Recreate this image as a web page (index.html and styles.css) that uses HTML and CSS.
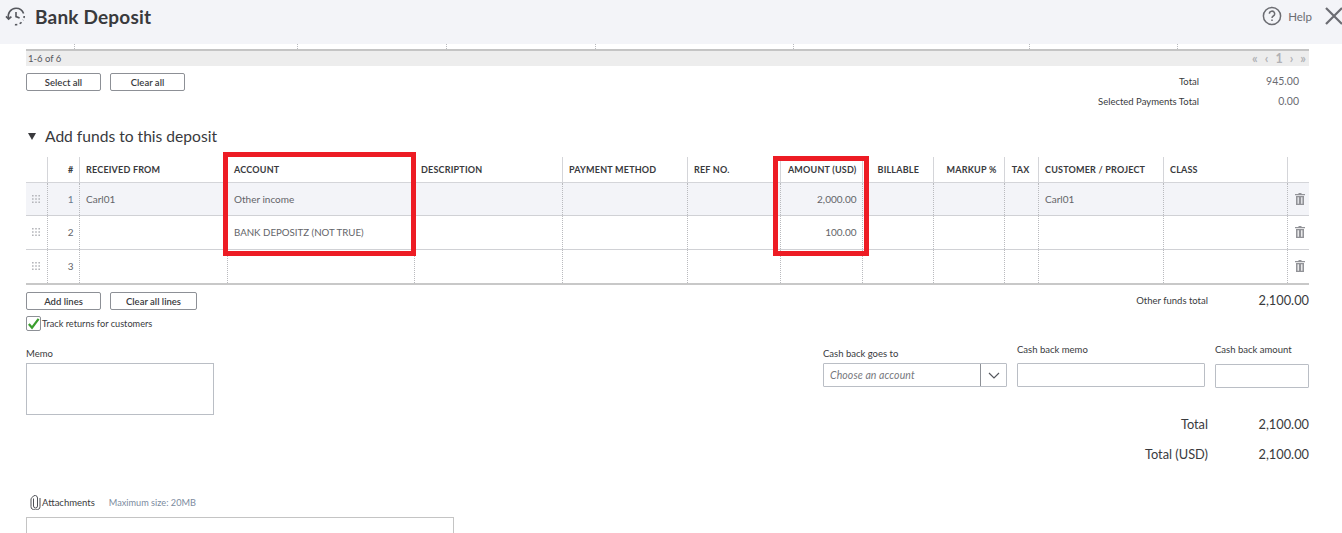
FILE: index.html
```html
<!DOCTYPE html>
<html lang="en">
<head>
<meta charset="utf-8">
<title>Bank Deposit</title>
<link rel="stylesheet" href="styles.css">
</head>
<body>
<header class="topbar">
  <div class="title-group">
    <svg class="history-icon" width="22" height="22" viewBox="0 0 22 22" fill="none" stroke="#55575d" stroke-width="1.6">
      <path d="M3.6 13.5A8 8 0 0 1 11 3.2a8 8 0 0 1 7.6 5.4"/>
      <path d="M19.2 11a8 8 0 0 1-1.2 4.2" stroke-dasharray="2 2"/>
      <path d="M16.5 17.2a8 8 0 0 1-7 2.4" stroke-dasharray="2.4 2.4"/>
      <path d="M1 11.4l2.6 2.8 2.8-2.6"/>
      <path d="M11 7v4.6l3.6 1.4"/>
    </svg>
    <h1 class="title">Bank Deposit</h1>
  </div>
  <div class="top-actions">
    <svg width="20" height="20" viewBox="0 0 20 20" fill="none" stroke="#6b6c72" stroke-width="1.5">
      <circle cx="10" cy="10" r="8.6"/>
      <path d="M7.4 7.8a2.6 2.6 0 1 1 3.9 2.2c-.9.5-1.3 1-1.3 2"/>
      <path d="M10 13.4v1.6"/>
    </svg>
    <span class="help">Help</span>
    <svg class="close" width="18" height="18" viewBox="0 0 18 18" fill="none" stroke="#6b6c72" stroke-width="2.2">
      <path d="M1 1l16 16M17 1L1 17"/>
    </svg>
  </div>
</header>

<main class="page">
  <div class="ticks">
    <i></i><i></i><i></i><i></i><i></i><i></i><i></i>
  </div>
  <div class="pager">
    <span>1-6 of 6</span>
    <span class="pager-nav"><span>«</span><span>‹</span><b>1</b><span>›</span><span>»</span></span>
  </div>

  <div class="actions-row first">
    <div class="btns">
      <button class="btn w75">Select all</button>
      <button class="btn w75">Clear all</button>
    </div>
    <div class="payment-totals">
      <div class="pt-row"><span class="pt-label">Total</span><span class="pt-val">945.00</span></div>
      <div class="pt-row"><span class="pt-label">Selected Payments Total</span><span class="pt-val">0.00</span></div>
    </div>
  </div>

  <h2 class="section-title"><span class="caret"></span>Add funds to this deposit</h2>

  <table class="lines">
    <colgroup>
      <col class="c21"><col class="c32"><col class="c148"><col class="c187"><col class="c148"><col class="c125"><col class="c93"><col class="c82"><col class="c71"><col class="c71"><col class="c34"><col class="c125"><col class="c124"><col class="c22">
    </colgroup>
    <thead>
      <tr>
        <th></th><th class="r">#</th><th>RECEIVED FROM</th><th>ACCOUNT</th><th>DESCRIPTION</th><th>PAYMENT METHOD</th><th>REF NO.</th><th class="r">AMOUNT (USD)</th><th class="billable">BILLABLE</th><th class="r inset7">MARKUP %</th><th class="r inset8">TAX</th><th>CUSTOMER / PROJECT</th><th>CLASS</th><th></th>
      </tr>
    </thead>
    <tbody>
      <tr class="shaded">
        <td class="grip"><svg class="grip-ico" width="8" height="8" viewBox="0 0 8 8" fill="#b4b5ba"><path d="M0 0h1.6v1.6H0zM3.2 0h1.6v1.6H3.2zM6.4 0H8v1.6H6.4zM0 3.2h1.6v1.6H0zM3.2 3.2h1.6v1.6H3.2zM6.4 3.2H8v1.6H6.4zM0 6.4h1.6V8H0zM3.2 6.4h1.6V8H3.2zM6.4 6.4H8V8H6.4z"/></svg></td>
        <td class="r num">1</td><td>Carl01</td><td>Other income</td><td></td><td></td><td></td><td class="r">2,000.00</td><td></td><td></td><td></td><td>Carl01</td><td></td>
        <td class="trash"><svg width="10" height="12" viewBox="0 0 10 12" fill="#929398"><path d="M3.5 0h3v1H10v1.2H0V1h3.5zM1 3h8v9H1zM2.6 4.2v6.6h1.2V4.2zM6.2 4.2v6.6h1.2V4.2z" fill-rule="evenodd"/></svg></td>
      </tr>
      <tr>
        <td class="grip"><svg class="grip-ico" width="8" height="8" viewBox="0 0 8 8" fill="#b4b5ba"><path d="M0 0h1.6v1.6H0zM3.2 0h1.6v1.6H3.2zM6.4 0H8v1.6H6.4zM0 3.2h1.6v1.6H0zM3.2 3.2h1.6v1.6H3.2zM6.4 3.2H8v1.6H6.4zM0 6.4h1.6V8H0zM3.2 6.4h1.6V8H3.2zM6.4 6.4H8V8H6.4z"/></svg></td>
        <td class="r">2</td><td></td><td class="caps">BANK DEPOSITZ (NOT TRUE)</td><td></td><td></td><td></td><td class="r">100.00</td><td></td><td></td><td></td><td></td><td></td>
        <td class="trash"><svg width="10" height="12" viewBox="0 0 10 12" fill="#929398"><path d="M3.5 0h3v1H10v1.2H0V1h3.5zM1 3h8v9H1zM2.6 4.2v6.6h1.2V4.2zM6.2 4.2v6.6h1.2V4.2z" fill-rule="evenodd"/></svg></td>
      </tr>
      <tr class="last-row">
        <td class="grip"><svg class="grip-ico" width="8" height="8" viewBox="0 0 8 8" fill="#b4b5ba"><path d="M0 0h1.6v1.6H0zM3.2 0h1.6v1.6H3.2zM6.4 0H8v1.6H6.4zM0 3.2h1.6v1.6H0zM3.2 3.2h1.6v1.6H3.2zM6.4 3.2H8v1.6H6.4zM0 6.4h1.6V8H0zM3.2 6.4h1.6V8H3.2zM6.4 6.4H8V8H6.4z"/></svg></td>
        <td class="r">3</td><td></td><td></td><td></td><td></td><td></td><td></td><td></td><td></td><td></td><td></td><td></td>
        <td class="trash"><svg width="10" height="12" viewBox="0 0 10 12" fill="#929398"><path d="M3.5 0h3v1H10v1.2H0V1h3.5zM1 3h8v9H1zM2.6 4.2v6.6h1.2V4.2zM6.2 4.2v6.6h1.2V4.2z" fill-rule="evenodd"/></svg></td>
      </tr>
    </tbody>
  </table>

  <div class="highlight hl-account"></div>
  <div class="highlight hl-amount"></div>

  <div class="actions-row second">
    <div class="btns">
      <button class="btn w75">Add lines</button>
      <button class="btn w87">Clear all lines</button>
    </div>
    <div class="funds-total"><span class="ft-label">Other funds total</span><span class="ft-val">2,100.00</span></div>
  </div>

  <label class="track">
    <span class="checkbox"><svg width="14" height="13" viewBox="0 0 14 13" fill="none" stroke="#3b9e2e" stroke-width="2.4"><path d="M2 7l3.4 4L12.5 1.5"/></svg></span>
    Track returns for customers
  </label>

  <div class="form-row">
    <div class="memo">
      <div class="field-label">Memo</div>
      <div class="memo-box"></div>
    </div>
    <div class="cash">
      <div class="cash-goes">
        <div class="field-label">Cash back goes to</div>
        <div class="select"><span class="select-text">Choose an account</span><span class="select-arrow"><svg width="12" height="7" viewBox="0 0 12 7" fill="none" stroke="#55575d" stroke-width="1.2"><path d="M1 1l5 5 5-5"/></svg></span></div>
      </div>
      <div class="cash-memo">
        <div class="field-label gap-large">Cash back memo</div>
        <div class="input"></div>
      </div>
      <div class="cash-amount">
        <div class="field-label gap-larger">Cash back amount</div>
        <div class="input"></div>
      </div>
    </div>
  </div>

  <div class="grand">
    <div class="g-row"><span class="g-label">Total</span><span class="g-val">2,100.00</span></div>
    <div class="g-row"><span class="g-label">Total (USD)</span><span class="g-val">2,100.00</span></div>
  </div>

  <div class="attach-head">
    <svg width="11" height="15" viewBox="0 0 11 15" fill="none" stroke="#4f5157" stroke-width="1"><path d="M3.5 3.5v7.5a2 2 0 0 0 4 0V3A2.5 2.5 0 0 0 2.7 2 L1 3.5v8a4.2 3.2 0 0 0 9 0V3"/></svg>
    <span class="attach-title">Attachments</span>
    <span class="attach-size">Maximum size: 20MB</span>
  </div>
  <div class="attach-box"></div>
</main>
</body>
</html>
```

FILE: styles.css
```css
* { box-sizing: border-box; }
html, body { margin: 0; padding: 0; height: 533px; overflow: hidden; }
body { font-family: "Lato", "Liberation Sans", sans-serif; background: #fff; color: #393a3d; font-size: 9.5px; position: relative; }

.topbar { height: 44px; background: #f3f4f8; display: flex; justify-content: space-between; align-items: flex-start; }
.title-group { display: flex; align-items: center; padding: 6px 0 0 5px; }
.history-icon { margin: -2px 8px 0 0; }
.title { margin: 0; font-size: 19px; font-weight: 700; letter-spacing: 0.2px; color: #393a3d; line-height: 22px; }
.top-actions { display: flex; align-items: center; padding-top: 6px; margin-right: -1px; }
.help { font-size: 11.5px; color: #6b6c72; margin: 0 13px 0 6px; }
.close { display: block; }

.page { padding: 0 33px 0 26px; }

.ticks { height: 5px; display: grid; grid-template-columns: 49px 223px 149px 149px 198px 236px 148px; }
.ticks i { justify-self: end; border-right: 1px dotted #b9babe; }
.pager { height: 17px; background: #ededed; border-top: 2px solid #c4c4c4; display: flex; justify-content: space-between; align-items: center; padding: 0 3px 0 2px; font-size: 9.5px; color: #55575d; }
.pager-nav { display: flex; gap: 7px; color: #b0b1b5; font-size: 12.5px; font-weight: 700; }
.pager-nav b { font-weight: 700; }

.actions-row { display: flex; justify-content: space-between; align-items: flex-start; }
.actions-row.first { margin-top: 7px; height: 43px; }
.actions-row.second { margin-top: 7px; height: 23px; }
.btns { display: flex; gap: 9px; }
.btn { height: 18px; padding: 0; background: #fff; border: 1px solid #8d9096; border-radius: 2px; font: 600 9.5px "Lato", sans-serif; color: #393a3d; }
.w75 { width: 75px; }
.w87 { width: 87px; }

.payment-totals { margin-top: -2px; }
.pt-row { display: flex; justify-content: flex-end; height: 20px; align-items: center; }
.pt-label { font-size: 9.5px; color: #393a3d; }
.pt-val { width: 110px; text-align: right; padding-right: 10px; font-size: 10.5px; color: #6b6c72; }

.section-title { margin: 9px 0 0; height: 22px; display: flex; align-items: center; font-size: 15.6px; font-weight: 400; color: #393a3d; }
.caret { width: 0; height: 0; border-left: 4px solid transparent; border-right: 4px solid transparent; border-top: 7px solid #393a3d; margin: 0 9px 0 2px; }

.lines { width: 1283px; table-layout: fixed; border-collapse: collapse; margin-top: 10px; }
.c21 { width: 21px; } .c32 { width: 32px; } .c148 { width: 148px; } .c187 { width: 187px; } .c125 { width: 125px; } .c93 { width: 93px; } .c82 { width: 82px; } .c71 { width: 71px; } .c34 { width: 34px; } .c124 { width: 124px; } .c22 { width: 22px; }
.lines th { height: 25px; padding: 0 5px 0 6.5px; font-size: 9px; font-weight: 700; text-align: left; color: #393a3d; border-right: 1px solid #d4d5d9; border-bottom: 1px solid #d4d5d9; letter-spacing: 0.2px; white-space: nowrap; }
.lines th:last-child { border-right: 0; }
.lines td { height: 34px; padding: 0 5px 0 6.5px; font-size: 10px; color: #636468; border-right: 1px dotted #b9babe; border-bottom: 1px solid #d0d1d5; white-space: nowrap; }
.lines td:last-child { border-right: 0; }
.lines td.caps { font-size: 9.7px; }
.lines .shaded td { height: 33px; }
.lines .last-row td { height: 35px; border-bottom: 2px solid #c8c8c8; }
.lines .r { text-align: right; }
.lines .billable { padding-left: 15px; }
.lines .inset7 { padding-right: 7px; }
.lines .inset8 { padding-right: 8px; }
.shaded td { background: #f3f4f8; }
.lines td.num { color: #6b7a8c; }
.grip-ico, .trash svg { display: block; margin: 0 auto; }
.lines td.grip { padding: 0; }
.lines td.trash { padding: 0 0 0 4px; }

.highlight { position: absolute; border: 5px solid #ed1c24; pointer-events: none; }
.hl-account { left: 223px; top: 152px; width: 193px; height: 104px; }
.hl-amount { left: 773px; top: 156px; width: 96px; height: 100px; }

.funds-total { display: flex; align-items: center; height: 16px; }
.ft-label { font-size: 9.5px; color: #393a3d; }
.ft-val { width: 101px; text-align: right; font-size: 12.8px; color: #393a3d; }

.track { display: flex; align-items: center; height: 16px; font-size: 9.2px; color: #393a3d; gap: 1px; }
.checkbox { width: 15px; height: 15px; border: 1px solid #8d9096; border-radius: 2px; display: flex; align-items: center; justify-content: center; background: #fff; }

.form-row { display: flex; justify-content: space-between; margin-top: 16px; height: 78px; }
.field-label { font-size: 9.5px; color: #393a3d; height: 14px; line-height: 14px; }
.memo-box { width: 188px; height: 52px; border: 1px solid #babec5; margin-top: 2px; }
.cash { display: flex; }
.cash-goes { width: 184px; margin-right: 10px; }
.cash-memo { width: 188px; margin-right: 10px; margin-top: -4px; }
.cash-amount { width: 94px; margin-top: -4px; }
.gap-large { margin-bottom: 6px; }
.gap-larger { margin-bottom: 7px; }
.select { height: 24px; margin-top: 2px; border: 1px solid #babec5; border-radius: 1px; display: flex; align-items: center; }
.select-text { flex: 1; padding-left: 6px; font-size: 10.5px; letter-spacing: 0.1px; font-style: italic; color: #77787d; }
.select-arrow { width: 26px; height: 100%; border-left: 1px solid #8d9096; display: flex; align-items: center; justify-content: center; }
.input { height: 24px; border: 1px solid #babec5; border-radius: 1px; }

.grand { display: flex; flex-direction: column; margin-top: -16px; }
.g-row { display: flex; justify-content: flex-end; height: 30px; align-items: center; font-size: 12.8px; color: #393a3d; }
.g-val { width: 101px; text-align: right; }

.attach-head { display: flex; align-items: center; height: 16px; margin-top: 25px; padding-left: 4px; }
.attach-title { font-size: 9.5px; color: #393a3d; margin-left: 1px; }
.attach-size { font-size: 9.2px; color: #7d8ba0; margin-left: 14px; }
.attach-box { width: 428px; height: 16px; border: 1px solid #c4c4c4; border-bottom: 0; margin-top: 7px; }
```
